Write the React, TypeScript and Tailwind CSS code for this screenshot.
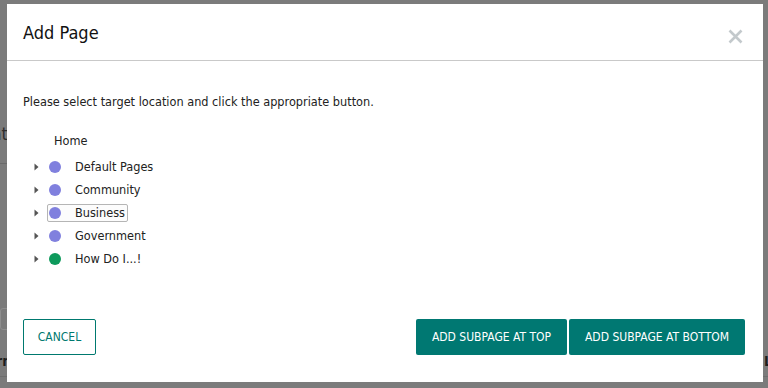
import React from 'react'

const font = { fontFamily: '"DejaVu Sans Condensed", "DejaVu Sans", Tahoma, sans-serif' }

const nodes = [
  { label: 'Default Pages', color: 'bg-[#8080de]' },
  { label: 'Community', color: 'bg-[#8080de]' },
  { label: 'Business', color: 'bg-[#8080de]', selected: true },
  { label: 'Government', color: 'bg-[#8080de]' },
  { label: 'How Do I...!', color: 'bg-[#0e9a5c]' },
]

const Caret = () => (
  <svg width="5" height="8" viewBox="0 0 5 8" className="shrink-0">
    <path d="M0.5 0.5 L4.5 4 L0.5 7.5 Z" fill="#555" />
  </svg>
)

export default function App() {
  return (
    <div className="relative h-[388px] w-[768px] overflow-hidden bg-[#7b7b7b]" style={font}>
      {/* page behind the overlay */}
      <div className="flex h-full flex-col">
        <div className="mt-[124px] -ml-[30px] text-[18px] leading-[20px] text-[#2e2e2e]">Centre</div>
        <div className="mt-[19px] h-px w-[20px] bg-[#6a6a6a]" />
        <div className="mt-[144px] h-[22px] w-[20px] rounded-[3px] border border-[#8e8e8e]" />
        <div className="mt-[24px] flex justify-between text-[14px] font-bold leading-[14px] text-[#1e1e1e]">
          <span className="-ml-[20px]">Turn</span>
          <span className="-mr-[20px]">LLL</span>
        </div>
        <div className="mt-[8px] h-px w-full bg-[#6e6e6e]" />
      </div>

      {/* modal */}
      <div className="absolute left-[7px] top-[4px] flex h-[378px] w-[756px] flex-col bg-white">
        <div className="flex h-[57px] shrink-0 items-center justify-between border-b border-[#c9c9c9] pl-[16px] pr-[20px]">
          <h1 className="mt-[2px] text-[18px] leading-[22px] text-[#111]">Add Page</h1>
          <svg width="15" height="15" viewBox="0 0 15 15" className="mt-[8px]">
            <path d="M1.5 1.5 L13.5 13.5 M13.5 1.5 L1.5 13.5" stroke="#c3c9cc" strokeWidth="2.6" />
          </svg>
        </div>

        <div className="flex flex-1 flex-col pl-[16px]">
          <p className="mt-[34px] text-[12.6px] leading-[14px] text-[#222]">
            Please select target location and click the appropriate button.
          </p>
          <div className="mt-[25px] pl-[31px] text-[12.6px] leading-[14px] text-[#222]">Home</div>
          <ul className="mt-[7px] flex flex-col">
            {nodes.map((n) => (
              <li key={n.label} className="flex h-[23px] items-center pl-[11px]">
                <Caret />
                <div
                  className={
                    'ml-[8px] flex h-[18px] items-center rounded-[2px] border pl-[1px] pr-[2px] ' +
                    (n.selected ? 'border-[#b5b5b5] bg-[#fcfcfc]' : 'border-transparent')
                  }
                >
                  <span className={'h-[12px] w-[12px] rounded-full ' + n.color} />
                  <span className="ml-[14px] text-[12.6px] leading-[14px] text-[#222]">{n.label}</span>
                </div>
              </li>
            ))}
          </ul>
        </div>

        <div className="flex shrink-0 items-center justify-between pb-[27px] pl-[16px] pr-[18px]">
          <button className="h-[36px] w-[73px] rounded-[2px] border border-[#00796f] text-[12px] text-[#00796f]">
            CANCEL
          </button>
          <div className="flex gap-[2px]">
            <button className="h-[36px] w-[151px] rounded-[2px] bg-[#007872] text-[12px] text-white">
              ADD SUBPAGE AT TOP
            </button>
            <button className="h-[36px] w-[176px] rounded-[2px] bg-[#007872] text-[12px] text-white">
              ADD SUBPAGE AT BOTTOM
            </button>
          </div>
        </div>
      </div>
    </div>
  )
}
